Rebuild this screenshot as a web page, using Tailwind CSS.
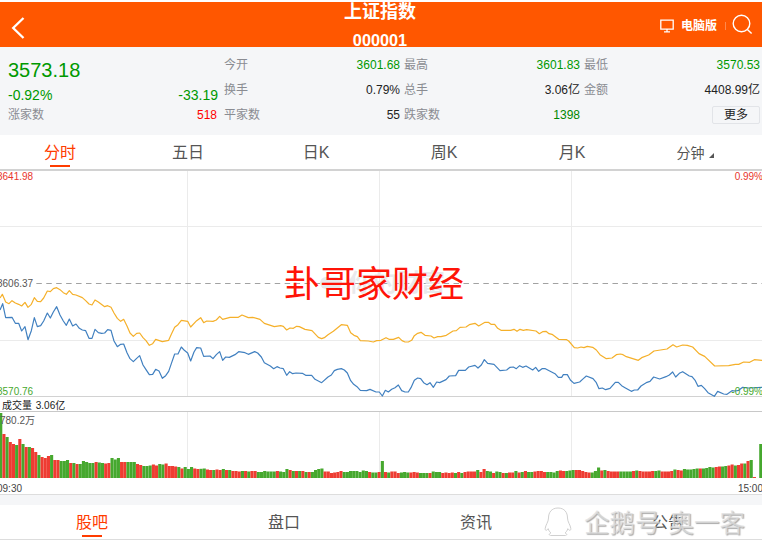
<!DOCTYPE html>
<html lang="zh-CN">
  <head>
    <meta charset="UTF-8" />
    <meta name="viewport" content="width=device-width, initial-scale=1.0" />
    <title>上证指数 000001</title>
    <script src="https://cdn.jsdelivr.net/npm/@tailwindcss/browser@4"></script>
  </head>

  <body class="bg-white overflow-hidden font-['Liberation_Sans','Noto_Sans_CJK_SC',sans-serif] text-[12px] text-[#222]">
    <div class="relative w-[762px] h-[549px] overflow-hidden pt-[2px]">
      <!-- header -->
      <header class="grid grid-cols-[1fr_auto_1fr] h-[45px] bg-[#ff5700] text-white overflow-hidden">
        <div class="flex h-[45px] items-start pl-[11px] pt-[15px]">
          <svg class="w-[14px] h-[22px]" viewBox="0 0 14 22" fill="none" stroke="currentColor" stroke-width="2.3">
            <path d="M12.5 1 2.2 11l10.3 10" />
          </svg>
        </div>
        <h1 class="text-center text-[18px] font-bold leading-[28px] -mt-[4px] pr-[2px]">
          上证指数<br /><span class="text-[16.300px]">000001</span>
        </h1>
        <div class="flex h-[45px] items-start justify-end pr-[9px] pt-[12px]">
          <svg class="w-[14px] h-[14px] mt-[5px] mr-[7px]" viewBox="0 0 14 14" fill="none" stroke="currentColor" stroke-width="1.3">
            <path d="M.8 1.2h12.4v9H.8zM7 10v2.5M4 12.9h6" />
          </svg>
          <span class="font-bold leading-4 mt-[4px]">电脑版</span>
          <i class="w-px h-2 bg-white/30 ml-[8px] mr-[6px] mt-[8px]"></i>
          <svg class="w-[21px] h-[21px]" viewBox="0 0 21 21" fill="none" stroke="currentColor" stroke-width="1.4">
            <circle cx="9.5" cy="9.5" r="8.3" />
            <path d="m15.4 15.4 4.2 4.2" />
          </svg>
        </div>
      </header>

      <!-- quote -->
      <section class="flex h-[88px] bg-[#f5f6f8] pl-2 pt-[6px] text-[#8a8c92] whitespace-nowrap">
        <div class="w-[210px] mr-[6px]">
          <div class="h-[36px] leading-[34px] text-[20px] text-[#090]">3573.18</div>
          <div class="flex justify-between h-[13px] leading-[12px] text-[14px] text-[#090]"><span>-0.92%</span><span>-33.19</span></div>
          <div class="flex justify-between leading-[26px]"><span>涨家数</span><span class="text-[#f00] pr-px">518</span></div>
        </div>
        <div class="w-[176px] mr-[4px] leading-[25px]">
          <div class="flex justify-between"><span>今开</span><span class="text-[#090]">3601.68</span></div>
          <div class="flex justify-between"><span>换手</span><span class="text-[#222]">0.79%</span></div>
          <div class="flex justify-between"><span>平家数</span><span class="text-[#222]">55</span></div>
        </div>
        <div class="w-[176px] mr-[4px] leading-[25px]">
          <div class="flex justify-between"><span>最高</span><span class="text-[#090]">3601.83</span></div>
          <div class="flex justify-between"><span>总手</span><span class="text-[#222]">3.06亿</span></div>
          <div class="flex justify-between"><span>跌家数</span><span class="text-[#080]">1398</span></div>
        </div>
        <div class="w-[176px] leading-[25px]">
          <div class="flex justify-between"><span>最低</span><span class="text-[#090]">3570.53</span></div>
          <div class="flex justify-between"><span>金额</span><span class="text-[#222]">4408.99亿</span></div>
          <div class="flex justify-end pt-[3px]">
            <button class="w-[48px] h-[18px] leading-[16px] border border-[#e2e4e8] rounded-[2px] text-[#222]">更多</button>
          </div>
        </div>
      </section>

      <!-- period tabs -->
      <nav class="grid grid-cols-6 w-[768px] -ml-1 h-[36px] border-b-2 border-[#d2d2d2] text-[16px] leading-[36px] text-center text-[#555]">
        <div class="flex flex-col items-center text-[#ff3c00]"><span class="h-[30px]">分时</span><i class="w-5 h-[2px] bg-[#ff3c00]"></i></div>
        <div>五日</div>
        <div>日K</div>
        <div>周K</div>
        <div>月K</div>
        <div class="flex items-center justify-center text-[14px] leading-[34px] pr-[10px]">
          分钟<svg class="w-[5px] h-[5px] ml-1 mt-1" viewBox="0 0 5 5"><path d="M5 0v5H0z" fill="#555" /></svg>
        </div>
      </nav>

      <!-- price chart, three units per pixel -->
      <section class="relative h-[226px] border-b border-[#d2d2d2] text-[10px] leading-3">
        <svg class="block w-[762px] h-[226px]" viewBox="0 0 2286 678" fill="none" stroke-linejoin="round">
          <path d="M562.5 0v675M1138.5 0v675M1714.5 0v675M0 166.5h2286M0 508.5h2286" stroke="#ebebeb" stroke-width="3" />
          <path d="M109 337.500H2286" stroke="#a2a2a2" stroke-width="3" stroke-dasharray="16.500 13.300" />
          <g transform="translate(0 252)" stroke-width="3.600">
            <polyline stroke="#f5b02a" points="0,129 7,118 17,141 27,146 36,137 46,144 56,148 65,153 75,142 84,157 94,148 103,128 112,139 122,140 131,129 142,108 151,110 160,101 170,98 180,104 190,113 199,118 208,107 218,118 228,120 247,128 257,137 267,147 276,150 285,135 295,141 314,155 323,152 333,157 342,174 352,190 362,199 371,193 381,213 390,234 400,244 410,235 419,234 429,248 438,257 448,271 458,266 467,253 487,260 506,256 514,238 524,217 534,209 544,196 563,199 572,216 590,197 602,188 611,203 620,198 639,199 649,195 659,184 668,193 690,187 715,187 726,180 745,188 758,187 780,193 793,205 823,215 842,212 850,214 860,225 870,219 880,220 890,214 898,215 915,223 936,227 955,247 965,251 973,248 984,239 1000,229 1024,209 1042,211 1052,233 1062,241 1072,245 1081,257 1105,258 1120,261 1130,257 1143,256 1158,248 1167,253 1180,253 1196,247 1206,257 1215,261 1225,261 1235,256 1243,242 1253,235 1263,232 1275,241 1293,243 1302,249 1313,245 1323,245 1339,241 1359,228 1369,227 1380,217 1398,216 1408,209 1425,205 1436,213 1455,202 1465,202 1473,208 1484,208 1493,220 1503,226 1532,226 1542,223 1551,229 1560,223 1570,226 1580,224 1608,228 1618,236 1628,230 1638,229 1647,236 1656,238 1676,253 1700,254 1706,258 1723,278 1733,279 1743,276 1752,278 1762,274 1778,277 1789,285 1800,299 1819,311 1836,309 1849,299 1861,297 1869,299 1879,305 1915,316 1925,308 1946,300 1962,288 2001,282 2019,269 2030,276 2048,270 2062,271 2078,276 2097,296 2114,304 2144,333 2186,332 2206,328 2216,328 2231,321 2249,322 2263,314 2286,316" />
            <polyline stroke="#4180c0" points="0,165 8,146 17,188 36,187 46,205 56,205 65,228 75,215 84,254 94,227 103,188 112,215 122,212 131,198 142,174 151,189 160,171 170,155 180,180 190,198 199,211 208,192 218,213 228,207 238,220 247,225 257,227 267,250 276,250 285,223 295,233 305,235 314,234 323,224 333,226 342,258 352,275 362,268 371,267 381,293 390,311 400,320 410,310 419,302 429,330 438,344 448,359 458,358 467,343 477,348 487,370 497,362 506,349 514,326 524,297 534,297 544,276 553,286 563,294 572,318 582,291 590,278 602,279 611,304 630,303 639,311 649,299 659,290 668,316 677,306 688,307 705,299 716,290 735,293 745,298 764,290 773,294 784,306 793,323 811,333 821,341 831,335 840,339 850,341 860,361 869,350 878,356 888,354 907,355 917,361 935,361 945,373 965,383 984,366 994,360 1003,347 1012,343 1024,341 1033,345 1042,354 1052,377 1061,388 1071,395 1081,406 1100,407 1110,403 1128,411 1138,411 1147,423 1156,406 1165,411 1175,403 1185,398 1195,390 1205,407 1215,411 1225,411 1233,398 1243,376 1253,369 1262,371 1271,383 1281,389 1290,383 1300,397 1310,381 1319,383 1338,374 1348,363 1367,362 1376,346 1396,346 1406,336 1425,331 1434,339 1444,330 1453,314 1463,325 1482,328 1500,347 1520,345 1530,337 1540,336 1549,341 1559,332 1568,337 1578,333 1598,345 1607,337 1616,349 1626,341 1636,341 1665,356 1675,367 1685,367 1690,359 1702,359 1711,375 1722,385 1739,381 1750,371 1759,363 1779,371 1789,383 1797,401 1807,399 1817,404 1830,400 1846,382 1855,382 1865,392 1875,398 1894,409 1903,405 1913,405 1923,393 1941,382 1950,379 1961,366 1979,372 1998,365 2008,360 2018,351 2027,366 2038,355 2048,350 2068,363 2076,365 2086,377 2094,394 2104,391 2114,401 2124,413 2143,424 2153,409 2171,417 2181,418 2196,407 2206,408 2216,406 2228,397 2246,399 2286,397" />
          </g>
        </svg>
        <span class="absolute left-[-3px] top-0 text-[#e8352c]">3641.98</span>
        <span class="absolute right-[-1px] top-0 text-[#e8352c]">0.99%</span>
        <span class="absolute left-[-3px] top-[107px] text-[#555]">3606.37</span>
        <span class="absolute left-[-3px] top-[215px] text-[#46a82e]">3570.76</span>
        <span class="absolute right-[-1px] top-[215px] text-[#46a82e]">-0.99%</span>
        <div class="absolute left-[320px] top-[97px] flex items-center text-[24px] leading-[30px] font-bold text-[#e9e9ec] whitespace-nowrap">
          <i class="w-[22px] h-3 mr-[7px] rounded-full bg-[#e9e9ec]"></i>你的财富
        </div>
        <div class="absolute left-[284px] top-[91px] text-[36px] leading-[46px] text-[#ff1408] whitespace-nowrap">卦哥家财经</div>
      </section>

      <!-- volume -->
      <div class="h-[15px] pl-[2px] leading-[17px] text-[10px] text-[#222] border-b border-[#c8c8c8] whitespace-pre">成交量 <span class="pl-[1px]">3.06亿</span></div>
      <section class="relative h-[66px]">
        <svg id="volume" class="block w-[762px] h-[66px]" viewBox="0 0 762 66">
          <path d="M187.500 0v66M379.500 0v66M571.500 0v66" stroke="#ebebeb" />
        </svg>
        <span class="absolute left-0 top-[3px] text-[10px] leading-3 text-[#555]">780.2万</span>
      </section>
      <div class="flex justify-between h-[17px] -ml-[3px] -mr-[1px] pt-[5px] text-[10px] leading-3 text-[#444] border-b border-[#ddd]"><span>09:30</span><span>15:00</span></div>
      <div class="h-[10px] bg-[#f5f6f8]"></div>

      <!-- bottom tabs -->
      <nav class="grid grid-cols-4 w-[768px] -ml-1 h-[35px] border-b border-[#ddd] text-[16px] leading-[36px] text-center text-[#555]">
        <div class="flex flex-col items-center text-[#ff3c00]"><span class="h-[30px]">股吧</span><i class="w-5 h-[2px] bg-[#ff3c00]"></i></div>
        <div>盘口</div>
        <div>资讯</div>
        <div>公告</div>
      </nav>

      <!-- source mark -->
      <div class="absolute left-[544px] top-[506px] flex items-center h-[34px] text-[25.500px] leading-[34px] text-[#dedede]/75 [text-shadow:1px_1px_1px_#aaa] whitespace-nowrap">
        <svg class="w-[28px] h-[30px] mr-[12px] -mt-[3px]" viewBox="0 0 28 30" fill="#fff" stroke="#d0d0d0" stroke-width="1">
          <path d="M14 1C7.500 1 4.500 5.500 4.500 11c0 4-3 7-3.300 10.500 0 2.500 1.300 2.300 3 .2.500 2 1.600 3.300 2.800 4.300-2 .6-2.500 2-.5 2.500h15c2-.5 1.500-1.900-.5-2.500 1.200-1 2.300-2.300 2.800-4.300 1.700 2.100 3 2.300 3-.2C26.500 18 23.500 15 23.500 11 23.500 5.500 20.500 1 14 1z" />
        </svg>
        企鹅号<span class="ml-[8px]">奥一客</span>
      </div>
    </div>

    <script>
      // one entry per minute: r = up, g = down, then the bar height
      const bars = `g65 r44 g41 r36 r34 g33 r39 g34 r31 g31 r30 r26 g23 r21 r20 r22 g23 r18 r18 g17
        g17 g18 r15 g15 r14 g14 g17 g16 g15 g15 r16 g15.5 g15 r14.5 r15 g20 g18.5 g20 r16 r16
        g16 g16 g16 r14 r13 g12 g12 g12.5 r13.5 r12.5 g14 g13.5 r14.5 r12 r12 r11.5 g11 r9.5 g11 g9
        g11 r9.5 r9 g9.2 g9.5 r8.5 r8 g8 r8.5 r8 g9 r8 g8 r7 r7 r6.5 g7 r7 g6.5 r7
        r7 g6 g6 g7 g6.5 g6.5 g6.5 r7 g6.5 g6 g9 r8 g7 r7 g7 r7 g6 r6 g6 g8
        g9 g9.5 r6.5 r6.5 r5 r5.5 r6 r7 g6 g6 g7 g7 g7 g6 g7.5 g7 r6 g5.5 g5.5 r6
        g17 r6 g5.5 r6.5 r6.5 r5 g5.5 g6 g5.5 r5.5 r6 r5.5 g5 g5 g5 r5 g6.5 g6 g6 r5
        r5.5 r5 r5.5 g5 r6 g5 r6 r6.5 r6.5 r6.5 g8 r6 r9 g7 g6.5 r5 g6.5 g6 r5 g5
        r5.5 r5.5 g7 r5.5 g6 r7 g6 g6 r6.5 r7 r7 r6 g6 g6 g5.5 g7 r7.5 r7 g7 g7.5
        g8 r8 r8 r7 r6 r5.5 g5.5 g7 g10.5 r7.5 g8 r7 r6.5 r6.5 r6.5 g6.5 g6.5 g6.5 g6.5 r7
        g7.5 r7 r6.5 r6.5 r6.5 r7 g7 g7.5 r6.5 r6.5 r6.5 r7 g8.5 r8 r7.5 g9 g8.5 g8.5 g9 g9.5
        r9.5 g9.5 g10 g11 g10.5 r11 r11.5 g11.5 g12 r12.5 r13.5 g12.5 r13 r14.5 g14.5 r17 g18 r1 r0 g34`.split(/\s+/);

      const svg = document.getElementById("volume");
      bars.forEach((bar, i) => {
        const height = parseFloat(bar.slice(1));
        const rect = document.createElementNS("http://www.w3.org/2000/svg", "rect");
        rect.setAttribute("x", i * 3.18 - 0.8);
        rect.setAttribute("y", 66 - height);
        rect.setAttribute("width", 3.1);
        rect.setAttribute("height", height);
        rect.setAttribute("fill", bar[0] === "r" ? "#ee3c32" : "#46a82e");
        svg.appendChild(rect);
      });
    </script>
  </body>
</html>
